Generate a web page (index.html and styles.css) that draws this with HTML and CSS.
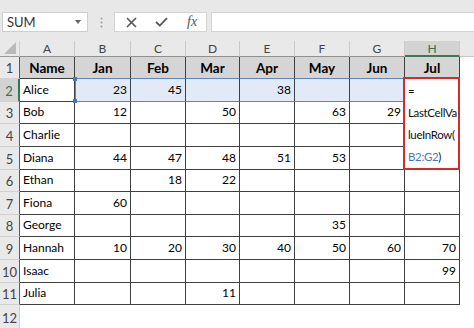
FILE: index.html
```html
<!DOCTYPE html>
<html>
<head>
<meta charset="utf-8">
<link rel="stylesheet" href="styles.css">
</head>
<body>
<div class="app">
  <div class="toolbar">
    <div class="namebox"><span>SUM</span><svg class="caret" width="6" height="4" viewBox="0 0 6 4"><path d="M0 0H6L3 4Z" fill="#666"/></svg></div>
    <div class="grip"><svg width="3" height="11" viewBox="0 0 3 11"><circle cx="1.5" cy="1.5" r="1" fill="#a0a0a0"/><circle cx="1.5" cy="5.5" r="1" fill="#a0a0a0"/><circle cx="1.5" cy="9.5" r="1" fill="#a0a0a0"/></svg></div>
    <div class="fxbox">
      <svg class="ico" width="11" height="11" viewBox="0 0 11 11"><path d="M1 1L10 10M10 1L1 10" stroke="#555" stroke-width="1.6" fill="none"/></svg>
      <svg class="ico" width="13" height="10" viewBox="0 0 13 10"><path d="M1 5L4.8 8.6L12 1.2" stroke="#555" stroke-width="1.8" fill="none"/></svg>
      <span class="fx">fx</span>
    </div>
    <div class="formula"></div>
  </div>
  <div class="sheet">
    <div class="corner"><svg width="12" height="12" viewBox="0 0 12 12"><path d="M12 0V12H0Z" fill="#b9b9b9"/></svg></div>
    <div class="ch">A</div><div class="ch">B</div><div class="ch">C</div><div class="ch">D</div><div class="ch">E</div><div class="ch">F</div><div class="ch">G</div><div class="ch sel">H</div><div class="ch-fill"></div>

    <div class="rh">1</div><div class="c hd">Name</div><div class="c hd">Jan</div><div class="c hd">Feb</div><div class="c hd">Mar</div><div class="c hd">Apr</div><div class="c hd">May</div><div class="c hd">Jun</div><div class="c hd">Jul</div><div class="fill"></div>

    <div class="rh sel">2</div><div class="c">Alice</div><div class="c n rng first">23</div><div class="c n rng">45</div><div class="c n rng"></div><div class="c n rng">38</div><div class="c n rng"></div><div class="c n rng last"></div>
    <div class="edit">
      <span class="ln">=</span>
      <span class="ln">LastCellVa</span>
      <span class="ln">lueInRow(</span>
      <span class="ln"><span class="ref">B2:G2</span>)</span>
    </div>
    <div class="fill"></div>

    <div class="rh">3</div><div class="c">Bob</div><div class="c n">12</div><div class="c n"></div><div class="c n">50</div><div class="c n"></div><div class="c n">63</div><div class="c n">29</div><div class="fill"></div>

    <div class="rh">4</div><div class="c">Charlie</div><div class="c n"></div><div class="c n"></div><div class="c n"></div><div class="c n"></div><div class="c n"></div><div class="c n"></div><div class="fill"></div>

    <div class="rh">5</div><div class="c">Diana</div><div class="c n">44</div><div class="c n">47</div><div class="c n">48</div><div class="c n">51</div><div class="c n">53</div><div class="c n"></div><div class="fill"></div>

    <div class="rh">6</div><div class="c">Ethan</div><div class="c n"></div><div class="c n">18</div><div class="c n">22</div><div class="c n"></div><div class="c n"></div><div class="c n"></div><div class="c"></div><div class="fill"></div>

    <div class="rh">7</div><div class="c">Fiona</div><div class="c n">60</div><div class="c n"></div><div class="c n"></div><div class="c n"></div><div class="c n"></div><div class="c n"></div><div class="c"></div><div class="fill"></div>

    <div class="rh">8</div><div class="c">George</div><div class="c n"></div><div class="c n"></div><div class="c n"></div><div class="c n"></div><div class="c n">35</div><div class="c n"></div><div class="c"></div><div class="fill"></div>

    <div class="rh">9</div><div class="c">Hannah</div><div class="c n">10</div><div class="c n">20</div><div class="c n">30</div><div class="c n">40</div><div class="c n">50</div><div class="c n">60</div><div class="c n">70</div><div class="fill"></div>

    <div class="rh">10</div><div class="c">Isaac</div><div class="c n"></div><div class="c n"></div><div class="c n"></div><div class="c n"></div><div class="c n"></div><div class="c n"></div><div class="c n">99</div><div class="fill"></div>

    <div class="rh">11</div><div class="c">Julia</div><div class="c n"></div><div class="c n"></div><div class="c n">11</div><div class="c n"></div><div class="c n"></div><div class="c n"></div><div class="c"></div><div class="fill"></div>

    <div class="rh last">12</div><div class="blank"></div>
  </div>
</div>
</body>
</html>
```
FILE: styles.css
```css
* { box-sizing: border-box; }
html, body { margin: 0; padding: 0; }
body {
  width: 474px;
  height: 328px;
  overflow: hidden;
  background: #fff;
  font-family: Lato, "Open Sans", sans-serif;
}
.app { display: flex; flex-direction: column; height: 328px; }

.toolbar {
  height: 41px;
  background: #e8e8e8;
  display: flex;
  align-items: flex-start;
  padding-top: 12px;
  padding-left: 2px;
}
.namebox {
  width: 86px;
  height: 20px;
  background: #fff;
  border: 1px solid #cfcfcf;
  display: flex;
  align-items: center;
  justify-content: space-between;
  padding: 0 6px 0 4px;
  font-size: 13px;
  color: #333;
}
.grip {
  width: 26px;
  height: 20px;
  display: flex;
  align-items: center;
  justify-content: center;
}
.fxbox {
  width: 93px;
  height: 20px;
  background: #fff;
  border: 1px solid #d4d4d4;
  display: flex;
  align-items: center;
  padding-left: 11px;
}
.fxbox .ico:first-child { margin-right: 18px; }
.fxbox .ico:nth-child(2) { margin-right: 19px; }
.fx {
  font-family: "Liberation Serif", serif;
  font-style: italic;
  font-size: 14px;
  color: #555;
  line-height: 1;
  margin-top: -1px;
}
.formula {
  flex: 1;
  height: 20px;
  margin-left: 4px;
  background: #fff;
  border-left: 1px solid #d4d4d4;
  border-top: 1px solid #d4d4d4;
  border-bottom: 1px solid #d4d4d4;
}

.sheet {
  flex: 1;
  display: grid;
  grid-template-columns: 20px 55px 56px 55px 54px 55px 55px 55px 55px 1fr;
  grid-template-rows: 16px 22px 23px 22px 23px 23px 22px 23px 22px 23px 23px 22px 1fr;
  font-size: 12px;
  color: #000;
}
.corner {
  background: #e9e9e9;
  border-right: 1px solid #cfcfcf;
  border-bottom: 1px solid #9a9a9a;
  display: flex;
  align-items: flex-end;
  justify-content: flex-end;
  padding: 0 3px 2px 0;
}
.ch {
  background: #e9e9e9;
  border-right: 1px solid #c9c9c9;
  border-bottom: 1px solid #8f8f8f;
  color: #444;
  font-size: 12px;
  display: flex;
  align-items: center;
  justify-content: center;
}
.ch.sel {
  background: #d3d3d3;
  color: #3c6b50;
  border-bottom: 2px solid #3b7a55;
}
.ch-fill {
  background: #e9e9e9;
  border-bottom: 1px solid #c9c9c9;
}
.rh {
  background: #e9e9e9;
  border-right: 1px solid #5a5a5a;
  border-bottom: 1px solid #d0d0d0;
  color: #444;
  font-size: 13px;
  display: flex;
  align-items: flex-end;
  justify-content: center;
  padding-bottom: 2px;
}
.rh.sel {
  background: #d3d3d3;
  color: #3d6e52;
  border-right: 2px solid #2f7a4e;
}
.rh.last { border-right: 1px solid #d0d0d0; border-bottom: none; }

.c {
  border-right: 1px solid #404040;
  border-bottom: 1px solid #404040;
  display: flex;
  align-items: flex-end;
  padding: 0 3px 4px 3px;
  white-space: nowrap;
  overflow: hidden;
}
.c.n { justify-content: flex-end; }
.c.hd {
  background: #d5d5d5;
  font-weight: 700;
  font-size: 13.5px;
  justify-content: center;
  padding-bottom: 2px;
}
.c.rng {
  background: #e1eaf6;
  border-top: 1px solid #5b87c9;
  border-bottom: 1px solid #5b87c9;
  margin-top: -1px;
}
.c.rng.first { box-shadow: inset 1px 0 0 #5b87c9; position: relative; overflow: visible; }
.c.rng.first::before,
.c.rng.first::after {
  content: "";
  position: absolute;
  left: -2px;
  width: 4px;
  height: 4px;
  background: #4a78c0;
}
.c.rng.first::before { top: -2px; }
.c.rng.first::after { bottom: -2px; }
.c.rng.last { border-right: 1px solid #5b87c9; }
.blank { grid-column: 2 / -1; }

.edit {
  grid-column: 9;
  grid-row: 3 / 7;
  margin: -2px 0 0 -2px;
  background: #fff;
  border: 2px solid #d42b2b;
  z-index: 2;
  display: flex;
  flex-direction: column;
  padding: 1px 0 0 3px;
  font-size: 11.5px;
  letter-spacing: -0.35px;
  line-height: 22px;
  color: #111;
  white-space: nowrap;
}
.ref { color: #4a78c0; }
```
